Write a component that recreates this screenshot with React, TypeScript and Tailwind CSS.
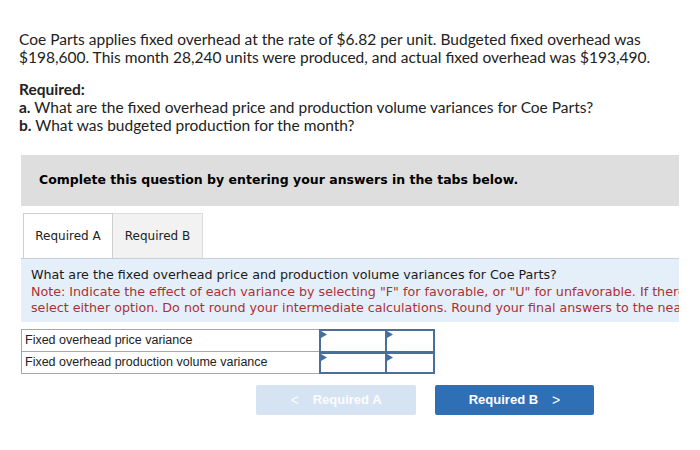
import React from "react";

function InputCell({ w }: { w: string }) {
  return (
    <div className={`relative h-full ${w} border-2 border-[#4a6f98] -ml-[2px] first:ml-0`}>
      <svg className="absolute left-0 top-0" width="6" height="7" viewBox="0 0 6 7">
        <polygon points="0,0 6,3.5 0,7" fill="#3b6fb0" />
      </svg>
    </div>
  );
}

export default function App() {
  return (
    <div className="w-[700px] h-[450px] bg-white overflow-hidden relative">
      <div className="pl-[19px] pt-[30px] text-[15.5px] leading-[18px] text-[#222]" style={{ fontFamily: "Lato, 'Open Sans', sans-serif" }}>
        <p>Coe Parts applies fixed overhead at the rate of $6.82 per unit. Budgeted fixed overhead was</p>
        <p>$198,600. This month 28,240 units were produced, and actual fixed overhead was $193,490.</p>
        <p className="mt-[14px] font-bold">Required:</p>
        <p><span className="font-bold">a.</span> What are the fixed overhead price and production volume variances for Coe Parts?</p>
        <p><span className="font-bold">b.</span> What was budgeted production for the month?</p>
      </div>

      <div className="ml-[21px] w-[658px]" style={{ fontFamily: "'DejaVu Sans', Verdana, sans-serif" }}>
        <div className="mt-[21px] h-[51px] bg-[#dedede] flex items-center pl-[18px] text-[12.5px] font-bold text-black">
          Complete this question by entering your answers in the tabs below.
        </div>

        <div className="mt-[7px] flex pl-[2px]">
          <div className="w-[90px] h-[45px] bg-white border border-b-0 border-[#cfcfcf] flex items-center justify-center text-[12px] text-[#222]">
            Required A
          </div>
          <div className="w-[90px] h-[45px] bg-[#f2f2f2] border border-l-0 border-b-0 border-[#dcdcdc] flex items-center justify-center text-[12px] text-[#222]">
            Required B
          </div>
        </div>

        <div className="h-[64px] bg-[#e4effa] border-t border-[#c6ced6] pl-[10px] pt-[8px] text-[12.7px] leading-[16.5px] whitespace-nowrap overflow-hidden">
          <p className="text-[#1a1a1a]">What are the fixed overhead price and production volume variances for Coe Parts?</p>
          <p className="text-[#b03030]">Note: Indicate the effect of each variance by selecting "F" for favorable, or "U" for unfavorable. If there is no effect on variance, do not</p>
          <p className="text-[#b03030]">select either option. Do not round your intermediate calculations. Round your final answers to the nearest whole dollar.</p>
        </div>

        <div className="mt-[7px] text-[12.5px] text-[#222]" style={{ fontFamily: "'Liberation Sans', Arial, sans-serif" }}>
          <div className="flex h-[23px]">
            <div className="w-[299px] border border-[#a8a8a8] flex items-center pl-[3px]">Fixed overhead price variance</div>
            <div className="flex h-[24px] -ml-[1px]">
              <InputCell w="w-[68px]" />
              <InputCell w="w-[50px]" />
            </div>
          </div>
          <div className="flex h-[22px]">
            <div className="w-[299px] border border-t-0 border-[#a8a8a8] flex items-center pl-[3px]">Fixed overhead production volume variance</div>
            <div className="flex h-[22px] -ml-[1px]">
              <InputCell w="w-[68px]" />
              <InputCell w="w-[50px]" />
            </div>
          </div>
        </div>

        <div className="mt-[11px] flex gap-[19px] pl-[235px] text-[13px] font-bold" style={{ fontFamily: "'Liberation Sans', Arial, sans-serif" }}>
          <div className="w-[160px] h-[30px] bg-[#d5e3f3] rounded-[2px] flex items-center justify-center text-white/90">
            <span className="mr-[14px] font-normal text-[14px]">&lt;</span>
            Required A
          </div>
          <div className="w-[159px] h-[30px] bg-[#2f6fb6] rounded-[2px] flex items-center justify-center text-white">
            Required B
            <span className="ml-[14px] font-normal text-[14px]">&gt;</span>
          </div>
        </div>
      </div>
    </div>
  );
}
